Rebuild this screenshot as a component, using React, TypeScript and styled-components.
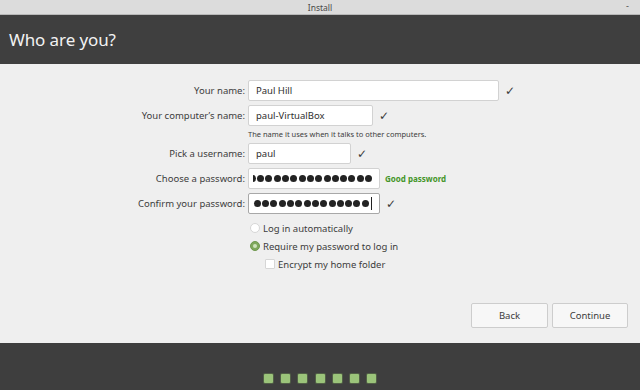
import React from 'react';
import styled, { createGlobalStyle } from 'styled-components';

const GlobalStyle = createGlobalStyle`
  html, body {
    margin: 0;
    padding: 0;
    background: #efefef;
  }
  body {
    font-family: 'Noto Sans', 'Open Sans', sans-serif;
    color: #3c3c3c;
  }
`;

const Window = styled.div`
  width: 640px;
  height: 390px;
  display: flex;
  flex-direction: column;
  overflow: hidden;
`;

const TitleBar = styled.div`
  position: relative;
  height: 14px;
  background: #dcdcdc;
  border-bottom: 1px solid #b8b8b8;
  display: flex;
  align-items: center;
  justify-content: center;
  font-size: 8.5px;
  color: #4a4a4a;

  span.min {
    position: absolute;
    right: 11px;
    top: 0;
    font-size: 9px;
    line-height: 12px;
  }
`;

const Header = styled.div`
  height: 49px;
  background: #3f3f3f;
  display: flex;
  align-items: center;
  padding-left: 9px;
  font-size: 17px;
  color: #f2f2f2;
  letter-spacing: -0.1px;
`;

const Body = styled.div`
  flex: 1;
  background: #efefef;
  display: flex;
  flex-direction: column;
  padding-top: 16px;
`;

const Form = styled.div`
  display: grid;
  grid-template-columns: 245px 1fr;
  column-gap: 3px;
  row-gap: 4px;
  align-items: center;
`;

const Label = styled.div`
  text-align: right;
  font-size: 9.5px;
  color: #3c3c3c;
`;

const Field = styled.div`
  display: flex;
  align-items: center;
  gap: 6px;
`;

const Input = styled.div<{ $w: number; $focus?: boolean }>`
  box-sizing: border-box;
  width: ${(p) => p.$w}px;
  height: 21px;
  background: #fff;
  border: 1px solid ${(p) => (p.$focus ? '#a8a8a8' : '#d2d2d2')};
  border-radius: 2px;
  display: flex;
  align-items: center;
  padding: 0 7px;
  font-size: 9.5px;
  color: #2e2e2e;
  overflow: hidden;
`;

const Dots = styled.div`
  flex: 1;
  display: flex;
  justify-content: flex-end;
  align-items: center;
  overflow: hidden;
  gap: 1.3px;
  margin-left: -3px;
`;

const Dot = styled.span`
  flex: none;
  width: 7px;
  height: 7px;
  border-radius: 50%;
  background: #232323;
`;

const Caret = styled.span`
  flex: none;
  width: 1px;
  height: 13px;
  background: #222;
  margin-left: 1px;
`;

const Check = styled.span`
  font-family: 'DejaVu Sans', sans-serif;
  font-size: 12px;
  color: #3a3a3a;
`;

const Hint = styled.div`
  font-size: 7.5px;
  color: #3c3c3c;
  margin-top: -1px;
  margin-bottom: 0;
`;

const Strength = styled.span`
  font-size: 8px;
  font-weight: 700;
  color: #449528;
  margin-left: -1px;
`;

const Options = styled.div`
  display: flex;
  flex-direction: column;
  gap: 6px;
  margin-top: 4px;
  padding-left: 2px;
`;

const Option = styled.div<{ $indent?: number }>`
  display: flex;
  align-items: center;
  gap: 3px;
  height: 12px;
  padding-left: ${(p) => p.$indent ?? 0}px;
  font-size: 9.5px;
  color: #3c3c3c;
`;

const Radio = styled.span<{ $on?: boolean }>`
  box-sizing: border-box;
  width: 10px;
  height: 10px;
  border-radius: 50%;
  background: ${(p) => (p.$on ? '#7fa85c' : '#fff')};
  border: 1px solid ${(p) => (p.$on ? '#6f984e' : '#d6d6d6')};
  display: flex;
  align-items: center;
  justify-content: center;

  &::after {
    content: '';
    display: ${(p) => (p.$on ? 'block' : 'none')};
    width: 4px;
    height: 4px;
    border-radius: 50%;
    background: #cfe3bd;
  }
`;

const Box = styled.span`
  box-sizing: border-box;
  width: 10px;
  height: 10px;
  background: #fff;
  border: 1px solid #d6d6d6;
  border-radius: 1px;
`;

const Actions = styled.div`
  margin-top: auto;
  display: flex;
  justify-content: flex-end;
  gap: 4px;
  padding: 0 12px 15px 0;
`;

const Button = styled.div<{ $w: number }>`
  box-sizing: border-box;
  width: ${(p) => p.$w}px;
  height: 25px;
  background: #f7f7f7;
  border: 1px solid #cdcdcd;
  border-radius: 2px;
  display: flex;
  align-items: center;
  justify-content: center;
  font-size: 9.5px;
  color: #3c3c3c;
`;

const Footer = styled.div`
  height: 47px;
  background: #3e3e3e;
  display: flex;
  justify-content: center;
  align-items: flex-start;
  padding-top: 31px;
  box-sizing: border-box;
  gap: 8.3px;
`;

const Step = styled.span`
  width: 9px;
  height: 9px;
  background: #9bc47a;
  border-radius: 1px;
  box-shadow: 0 0 0 1px rgba(120, 160, 90, 0.35);
`;

const App = () => {
  const dots = Array.from({ length: 16 });

  return (
    <Window>
      <GlobalStyle />
      <TitleBar>
        Install
        <span className='min'>-</span>
      </TitleBar>
      <Header>Who are you?</Header>

      <Body>
        <Form>
          <Label>Your name:</Label>
          <Field>
            <Input $w={251}>Paul Hill</Input>
            <Check>✓</Check>
          </Field>

          <Label>Your computer’s name:</Label>
          <Field>
            <Input $w={125}>paul-VirtualBox</Input>
            <Check>✓</Check>
          </Field>

          <div />
          <Hint>The name it uses when it talks to other computers.</Hint>

          <Label>Pick a username:</Label>
          <Field>
            <Input $w={103}>paul</Input>
            <Check>✓</Check>
          </Field>

          <Label>Choose a password:</Label>
          <Field>
            <Input $w={132}>
              <Dots>
                {dots.map((_, i) => (
                  <Dot key={i} />
                ))}
              </Dots>
            </Input>
            <Strength>Good password</Strength>
          </Field>

          <Label>Confirm your password:</Label>
          <Field>
            <Input $w={132} $focus>
              <Dots>
                {dots.map((_, i) => (
                  <Dot key={i} />
                ))}
                <Caret />
              </Dots>
            </Input>
            <Check>✓</Check>
          </Field>

          <div />
          <Options>
            <Option>
              <Radio />
              Log in automatically
            </Option>
            <Option>
              <Radio $on />
              Require my password to log in
            </Option>
            <Option $indent={15}>
              <Box />
              Encrypt my home folder
            </Option>
          </Options>
        </Form>

        <Actions>
          <Button $w={77}>Back</Button>
          <Button $w={76}>Continue</Button>
        </Actions>
      </Body>

      <Footer>
        {Array.from({ length: 7 }).map((_, i) => (
          <Step key={i} />
        ))}
      </Footer>
    </Window>
  );
};

export default App;
